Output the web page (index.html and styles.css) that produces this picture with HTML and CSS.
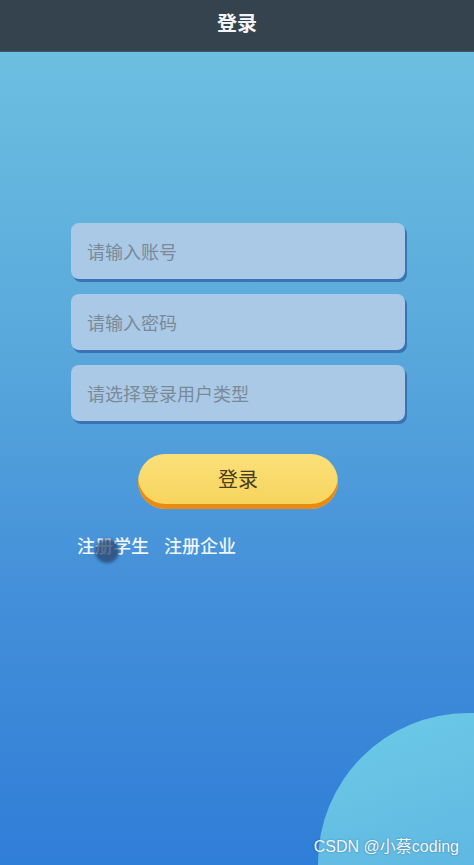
FILE: index.html
```html
<!DOCTYPE html>
<html lang="zh">
<head>
<meta charset="utf-8">
<title>登录</title>
<link rel="stylesheet" href="styles.css">
</head>
<body>
<div class="page">
  <header class="topbar"><h1 class="title">登录</h1></header>
  <main class="content">
    <form class="login-form">
      <div class="field"><input class="input" type="text" placeholder="请输入账号"></div>
      <div class="field"><input class="input" type="password" placeholder="请输入密码"></div>
      <div class="field"><div class="input select">请选择登录用户类型</div></div>
      <div class="btn-row"><button type="button" class="btn">登录</button></div>
      <div class="links">
        <a class="link">注册学生</a>
        <a class="link">注册企业</a>
        <span class="touch"></span>
      </div>
    </form>
    <div class="bubble"></div>
    <div class="watermark">CSDN @小蔡coding</div>
  </main>
</div>
</body>
</html>
```
FILE: styles.css
```css
* { box-sizing: border-box; }
html, body { margin: 0; padding: 0; }
body {
  font-family: "Noto Sans CJK SC", "Noto Sans", sans-serif;
  width: 474px;
  height: 865px;
  overflow: hidden;
}
.page {
  display: flex;
  flex-direction: column;
  height: 865px;
}
.topbar {
  height: 52px;
  background: #34434d;
  display: flex;
  align-items: center;
  justify-content: center;
  border-bottom: 1px solid #3d5868;
}
.title {
  margin: 0;
  color: #f2f4f5;
  font-size: 20px;
  font-weight: 700;
  line-height: 1;
  margin-top: -6px;
}
.content {
  flex: 1;
  position: relative;
  overflow: hidden;
  background: linear-gradient(180deg, #6cbfe0 0%, #5aa9dc 35%, #4590d9 65%, #2f7ed8 100%);
}
.login-form {
  display: flex;
  flex-direction: column;
  padding: 171px 0 0 71px;
  width: 408px;
}
.field {
  margin-bottom: 15px;
}
.input {
  display: flex;
  align-items: center;
  width: 334px;
  height: 56px;
  border: none;
  border-radius: 8px;
  background: #a9c9e7;
  box-shadow: 2px 3px 0 #3a72b4;
  padding: 0 16px;
  font-family: inherit;
  font-size: 18px;
  color: #7b8a98;
  outline: none;
}
.input::placeholder { color: #7b8a98; }
.btn-row {
  display: flex;
  padding-left: 67px;
  margin-top: 18px;
}
.btn {
  width: 200px;
  height: 55px;
  border: none;
  border-radius: 28px;
  background: linear-gradient(180deg, #fbe07a 0%, #f6d35a 100%);
  box-shadow: inset 0 -5px 0 #e98a12;
  font-family: inherit;
  font-size: 20px;
  color: #4a3c1c;
  padding: 0 0 6px;
}
.links {
  position: relative;
  display: flex;
  gap: 15px;
  margin-top: 25px;
  padding-left: 6px;
}
.link {
  color: #eef5fb;
  font-size: 18px;
  font-weight: 500;
  line-height: 22px;
}
.touch {
  position: absolute;
  left: 24px;
  top: 5px;
  width: 24px;
  height: 24px;
  border-radius: 50%;
  background: rgba(40, 70, 110, 0.75);
  filter: blur(1.5px);
}
.bubble {
  position: absolute;
  left: 318px;
  top: 661px;
  width: 300px;
  height: 300px;
  border-radius: 50%;
  background: linear-gradient(160deg, #6ecbe6 0%, #5cb4e2 60%, #4f9fe0 100%);
}
.watermark {
  position: absolute;
  right: 15px;
  bottom: 8px;
  color: #f1f6fb;
  font-family: "Liberation Sans", "Noto Sans CJK SC", sans-serif;
  font-size: 16px;
  text-shadow: 0 0 2px rgba(30, 60, 100, 0.5);
}
```
